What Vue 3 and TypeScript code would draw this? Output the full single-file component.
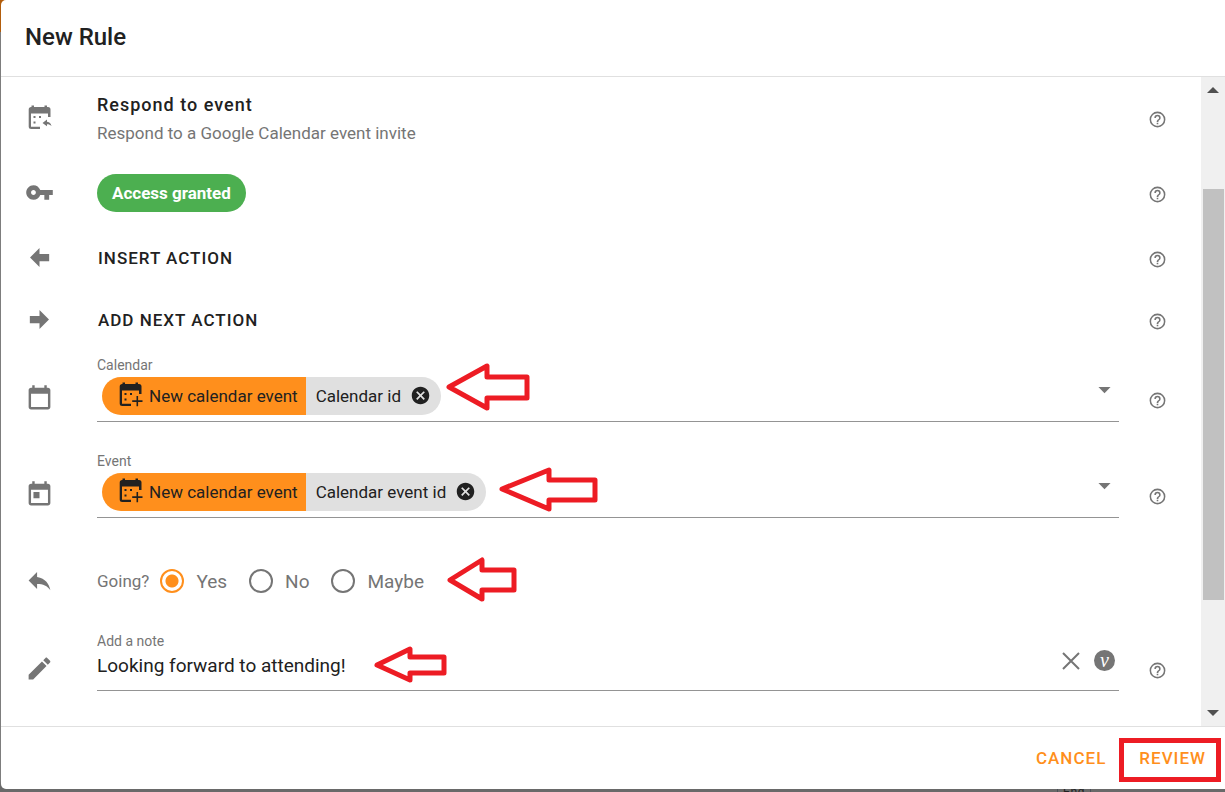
<script setup lang="ts">
import { ref } from 'vue'

const icons = {
  key: 'M7 14C5.9 14 5 13.1 5 12S5.9 10 7 10 9 10.9 9 12 8.1 14 7 14M12.6 10C11.8 7.7 9.6 6 7 6C3.7 6 1 8.7 1 12S3.7 18 7 18C9.6 18 11.8 16.3 12.6 14H16V18H20V14H23V10H12.6Z',
  left: 'M20 9V15H12V19.84L4.16 12L12 4.16V9H20Z',
  right: 'M4 15V9H12V4.16L19.84 12L12 19.84V15H4Z',
  calendar: 'M19 19H5V8H19M16 1V3H8V1H6V3H5C3.89 3 3 3.89 3 5V19C3 20.1 3.9 21 5 21H19C20.1 21 21 20.1 21 19V5C21 3.89 20.1 3 19 3H18V1Z',
  today: 'M7 10H12V15H7ZM19 19H5V8H19M16 1V3H8V1H6V3H5C3.89 3 3 3.89 3 5V19C3 20.1 3.9 21 5 21H19C20.1 21 21 20.1 21 19V5C21 3.89 20.1 3 19 3H18V1Z',
  reply: 'M10 9V5L3 12L10 19V14.9C15 14.9 18.5 16.5 21 20C20 15 17 10 10 9Z',
  pencil: 'M20.71 7.04C21.1 6.65 21.1 6 20.71 5.63L18.37 3.29C18 2.9 17.35 2.9 16.96 3.29L15.12 5.12L18.87 8.87M3 17.25V21H6.75L17.81 9.93L14.06 6.18L3 17.25Z',
  help: 'M11 18H13V16H11V18M12 2A10 10 0 0 0 2 12A10 10 0 0 0 12 22A10 10 0 0 0 22 12A10 10 0 0 0 12 2M12 20C7.59 20 4 16.41 4 12C4 7.59 7.59 4 12 4C16.41 4 20 7.59 20 12C20 16.41 16.41 20 12 20M12 6A4 4 0 0 0 8 10H10A2 2 0 0 1 12 8A2 2 0 0 1 14 10C14 12 11 11.75 11 15H13C13 12.75 16 12.5 16 10A4 4 0 0 0 12 6Z',
  closeCircle: 'M12 2C17.53 2 22 6.47 22 12S17.53 22 12 22 2 17.53 2 12 6.47 2 12 2M15.59 7L12 10.59L8.41 7L7 8.41L10.59 12L7 15.59L8.41 17L12 13.41L15.59 17L17 15.59L13.41 12L17 8.41L15.59 7Z',
  calendarFrame: 'M3.5 .5H6V2H16.5V.5H19V2H20A2.5 2.5 0 0 1 22.500 4.500V12H20V8.500H3V21.700H12V24H3.200A2.500 2.500 0 0 1 .7 21.500V4.500A2.500 2.500 0 0 1 3.200 2H3.500ZM5.500 11H7.500V13H5.500ZM11 11H13V13H11ZM5.500 16.500H7.500V18.500H5.500Z',
}

interface Field {
  id: string
  label: string
  icon: string
  value: string
}

const fields = ref<Field[]>([
  { id: 'calendar', label: 'Calendar', icon: icons.calendar, value: 'Calendar id' },
  { id: 'event', label: 'Event', icon: icons.today, value: 'Calendar event id' },
])
const actions = [
  { label: 'Insert action', icon: icons.left },
  { label: 'Add next action', icon: icons.right },
]
const answers = ['Yes', 'No', 'Maybe']
const going = ref('Yes')
const note = ref('Looking forward to attending!')

const arrows = [
  '449,387 487,366 487,377 527,377 527,398 487,398 487,408',
  '502,489 549,470 549,480 595,480 595,500 549,500 549,509',
  '450,580 482,560 482,570 514,570 514,590 482,590 482,599',
  '377,665 410,649 410,657 444,657 444,673 410,673 410,680',
]
</script>

<template>
  <div class="page">
    <span class="node" aria-hidden="true">End</span>
    <section class="dialog" role="dialog" aria-labelledby="dialog-title">
      <header class="header">
        <h1 id="dialog-title">New Rule</h1>
      </header>

      <div class="middle">
        <div class="rows">
          <div class="row row-intro">
            <svg class="cal" viewBox="0 0 24 25" aria-hidden="true">
              <path :d="icons.calendarFrame" />
              <path d="M19 14.500v2.200c3 .2 4 2 4.500 4.500c-1.200-1.600-2.500-2-4.500-2v2L14.500 18Z" />
            </svg>
            <div class="intro">
              <h2>Respond to event</h2>
              <p>Respond to a Google Calendar event invite</p>
            </div>
            <button class="help" aria-label="Help"><svg viewBox="0 0 24 24"><path :d="icons.help" /></svg></button>
          </div>

          <div class="row row-access">
            <svg class="icon" viewBox="0 0 24 24" aria-hidden="true"><path :d="icons.key" /></svg>
            <div><span class="granted">Access granted</span></div>
            <button class="help" aria-label="Help"><svg viewBox="0 0 24 24"><path :d="icons.help" /></svg></button>
          </div>

          <div v-for="a in actions" :key="a.label" class="row row-action">
            <svg class="icon" viewBox="0 0 24 24" aria-hidden="true"><path :d="a.icon" /></svg>
            <div><button class="action">{{ a.label }}</button></div>
            <button class="help" aria-label="Help"><svg viewBox="0 0 24 24"><path :d="icons.help" /></svg></button>
          </div>

          <div v-for="f in fields" :key="f.id" class="row row-field">
            <svg class="icon" viewBox="0 0 24 24" aria-hidden="true"><path :d="f.icon" /></svg>
            <div class="field">
              <label :for="f.id">{{ f.label }}</label>
              <div class="control">
                <span v-if="f.value" class="chip">
                  <span class="source">
                    <svg class="cal" viewBox="0 0 24 25" aria-hidden="true">
                      <path :d="icons.calendarFrame" />
                      <path d="M17.500 14h1.600v4.300h4.400v1.600h-4.400v4.400h-1.600v-4.400h-4.300v-1.600h4.300Z" />
                    </svg>
                    New calendar event
                  </span>
                  <span class="value">
                    {{ f.value }}
                    <button aria-label="Remove" @click="f.value = ''">
                      <svg viewBox="0 0 24 24"><path :d="icons.closeCircle" /></svg>
                    </button>
                  </span>
                </span>
                <input :id="f.id" class="text" type="text" />
                <button class="caret" aria-label="Open list"><svg viewBox="0 0 24 24"><path d="M7 10L12 15L17 10Z" /></svg></button>
              </div>
            </div>
            <button class="help" aria-label="Help"><svg viewBox="0 0 24 24"><path :d="icons.help" /></svg></button>
          </div>

          <div class="row row-going">
            <svg class="icon" viewBox="0 0 24 24" aria-hidden="true"><path :d="icons.reply" /></svg>
            <div class="radios" role="radiogroup" aria-labelledby="going-label">
              <span id="going-label">Going?</span>
              <label v-for="a in answers" :key="a">
                <input v-model="going" type="radio" name="going" :value="a" />{{ a }}
              </label>
            </div>
          </div>

          <div class="row row-note">
            <svg class="icon" viewBox="0 0 24 24" aria-hidden="true"><path :d="icons.pencil" /></svg>
            <div class="field">
              <label for="note">Add a note</label>
              <div class="control">
                <input id="note" v-model="note" class="text" type="text" />
                <button class="clear" aria-label="Clear" @click="note = ''">
                  <svg viewBox="0 0 18 18"><path d="M1 1L17 17M17 1L1 17" /></svg>
                </button>
                <button class="variable" aria-label="Insert variable">v</button>
              </div>
            </div>
            <button class="help" aria-label="Help"><svg viewBox="0 0 24 24"><path :d="icons.help" /></svg></button>
          </div>
        </div>

        <div class="scrollbar" aria-hidden="true">
          <svg viewBox="0 0 12 6"><path d="M0 6L6 0L12 6Z" /></svg>
          <div class="track"><i class="before"></i><i class="thumb"></i><i class="after"></i></div>
          <svg viewBox="0 0 12 6"><path d="M0 0L6 6L12 0Z" /></svg>
        </div>
      </div>

      <footer class="footer">
        <button>Cancel</button>
        <span class="marked"><button>Review</button></span>
      </footer>
    </section>

    <svg class="arrows" aria-hidden="true">
      <polygon v-for="p in arrows" :key="p" :points="p" />
    </svg>
  </div>
</template>

<style>
body {
  margin: 0;
}
</style>

<style scoped>
.page {
  position: relative;
  box-sizing: border-box;
  min-height: 100vh;
  padding: 0 0 3px 1px;
  display: flex;
  overflow: hidden;
  background: linear-gradient(#b25d0c 32px, #7d7d7d 32px, #7d7d7d 780px, #696969 786px);
  font-family: Roboto, "Liberation Sans", sans-serif;
  color: #212121;
}
.node {
  position: absolute;
  left: 1057px;
  bottom: -10px;
  padding: 0 5px;
  border: 1px solid #4a5058;
  font: 12px/16px "Liberation Mono", monospace;
}
.dialog {
  position: relative;
  flex: 1;
  display: flex;
  flex-direction: column;
  background: #fff;
  border-radius: 5px 0 0 5px;
  overflow: hidden;
}
button {
  padding: 0;
  border: 0;
  background: none;
  font: inherit;
  color: inherit;
  cursor: pointer;
}
svg {
  display: block;
  fill: currentColor;
}
h1,
h2,
p {
  margin: 0;
}
.header {
  height: 76px;
  box-sizing: border-box;
  padding: 20px 24px;
}
h1 {
  font-size: 24px;
  line-height: 34px;
  font-weight: 500;
}
.middle {
  flex: 1;
  display: flex;
  border-top: 1px solid #e0e0e0;
  border-bottom: 1px solid #e0e0e0;
}
.rows {
  flex: 1;
  padding: 0 34px 0 24px;
}
.row {
  display: grid;
  grid-template-columns: 29px 1fr 19px;
  column-gap: 29px;
  align-items: center;
  color: #212121;
}
.row > :nth-child(2) {
  margin-left: 14px;
}
.icon {
  width: 29px;
  height: 29px;
  margin-bottom: 2px;
  color: #757575;
}
.cal {
  width: 24px;
  height: 25px;
}
.row > .cal {
  margin-left: 3px;
  margin-bottom: 2px;
  color: #757575;
}
.help {
  margin-top: 2px;
  color: #757575;
}
.help svg {
  width: 19px;
  height: 19px;
}
.row-intro {
  height: 82px;
}
.intro {
  padding-top: 2px;
}
h2 {
  font-size: 18px;
  line-height: 28px;
  font-weight: 500;
  letter-spacing: 1px;
}
p {
  font-size: 17px;
  line-height: 28px;
  color: #757575;
}
.row-access {
  height: 68px;
}
.granted {
  display: inline-block;
  padding: 0 15px;
  border-radius: 19px;
  background: #4caf50;
  color: #fff;
  font-size: 17px;
  line-height: 38px;
  font-weight: 700;
}
.row-action {
  height: 62px;
}
.action {
  padding: 0 1px;
  font-size: 17px;
  line-height: 24px;
  font-weight: 500;
  letter-spacing: 1px;
  text-transform: uppercase;
}
.row-field {
  height: 96px;
}
.field {
  align-self: start;
  padding-top: 6px;
}
.field label {
  display: block;
  font-size: 14px;
  line-height: 16px;
  color: #757575;
}
.control {
  display: flex;
  align-items: center;
  height: 48px;
  border-bottom: 1px solid #949494;
}
.row-field .control {
  box-sizing: border-box;
  height: 49px;
  padding: 0 0 3px 5px;
}
.chip {
  display: flex;
  height: 38px;
  border-radius: 19px;
  overflow: hidden;
  font-size: 17px;
  line-height: 38px;
  white-space: nowrap;
}
.source {
  display: flex;
  align-items: center;
  gap: 6px;
  padding: 0 8px 0 17px;
  background: #ff8f1c;
}
.source .cal {
  margin-bottom: 2px;
}
.value {
  display: flex;
  align-items: center;
  gap: 9px;
  padding: 0 10px;
  background: #e0e0e0;
}
.value svg {
  width: 21px;
  height: 21px;
}
.text {
  flex: 1;
  min-width: 0;
  padding: 0;
  border: 0;
  outline: 0;
  background: none;
  font: 19px/28px Roboto, "Liberation Sans", sans-serif;
  color: #212121;
}
.caret {
  margin-bottom: 12px;
  color: #757575;
}
.caret svg {
  width: 29px;
  height: 29px;
}
.row-going {
  height: 76px;
  margin-bottom: 8px;
}
.radios {
  display: flex;
  align-items: center;
  font-size: 17px;
  color: #757575;
}
.radios label {
  display: flex;
  align-items: center;
  gap: 12px;
  margin-right: 11px;
  padding-left: 11px;
  font-size: 19px;
}
.radios input {
  appearance: none;
  width: 24px;
  height: 24px;
  margin: 0;
  border: 2px solid #757575;
  border-radius: 50%;
}
.radios input:checked {
  border-color: #ff8f1c;
  background: radial-gradient(circle, #ff8f1c 6px, transparent 7px);
}
.row-note {
  height: 84px;
}
.row-note .control {
  box-sizing: border-box;
  height: 42px;
  padding: 0 4px 8px 0;
}
.clear,
.variable {
  margin-bottom: 10px;
}
.clear svg {
  width: 18px;
  height: 18px;
  fill: none;
  stroke: #757575;
  stroke-width: 2;
}
.variable {
  width: 21px;
  height: 21px;
  margin-left: 14px;
  border-radius: 50%;
  background: #757575;
  color: #fff;
  font: italic 400 20px/17px "Liberation Serif", serif;
}
.scrollbar {
  width: 24px;
  display: flex;
  flex-direction: column;
  align-items: center;
  background: #f0f0f0;
  color: #505050;
}
.scrollbar svg {
  width: 12px;
  height: 6px;
  margin: 10px 0;
}
.track {
  flex: 1;
  width: 21px;
  display: flex;
  flex-direction: column;
}
.before {
  flex: 86;
}
.thumb {
  flex: 411;
  background: #c1c1c1;
}
.after {
  flex: 100;
}
.footer {
  display: flex;
  justify-content: flex-end;
  align-items: center;
  gap: 13px;
  height: 62px;
  padding-right: 4px;
  color: #ff8f1c;
}
.footer button {
  font-size: 17px;
  line-height: 24px;
  font-weight: 500;
  letter-spacing: 1px;
  text-transform: uppercase;
}
.marked {
  box-sizing: border-box;
  height: 44px;
  margin-top: 4px;
  padding: 3px 10px 0 15px;
  border: 5px solid #ed1c24;
}
.arrows {
  position: absolute;
  inset: 0;
  width: 100%;
  height: 100%;
  pointer-events: none;
  fill: none;
  stroke: #ed1c24;
  stroke-width: 5;
  stroke-linejoin: round;
}
</style>
